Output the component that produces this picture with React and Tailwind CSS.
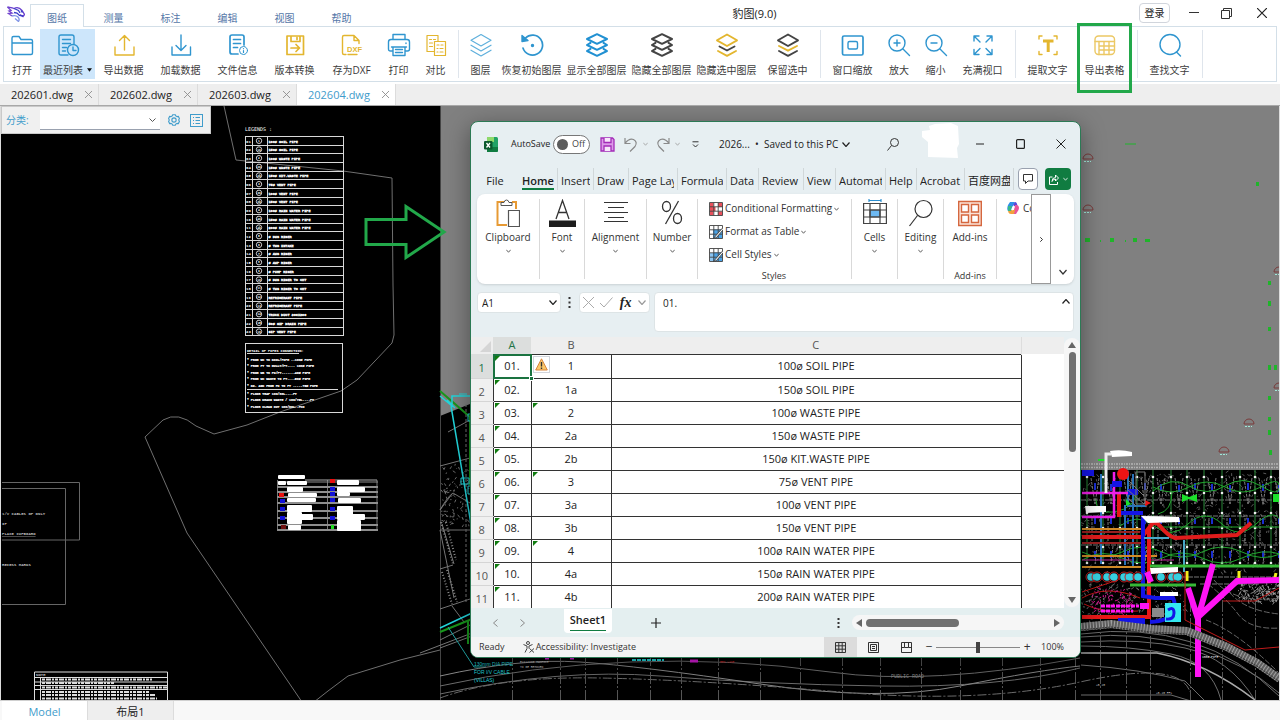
import { useState } from "react";

const BLUE = "#2f95cf";
const GOLD = "#e3b62f";
const DARK = "#444444";

// small icon wrapper used by the top ribbon
function Icon({ color = BLUE, children }) {
  return (
    <svg
      className="w-6 h-6"
      viewBox="0 0 24 24"
      fill="none"
      stroke={color}
      strokeWidth="1.4"
      strokeLinecap="round"
      strokeLinejoin="round"
    >
      {children}
    </svg>
  );
}

function Layers({ colors, width = 1.8 }) {
  return (
    <Icon>
      <g strokeWidth={width}>
        <path d="M12 1.5 22 7.3 12 13 2 7.3Z" stroke={colors[0]} />
        <path d="M2 12.2 12 18l10-5.8" stroke={colors[1]} />
        <path d="M2 17.2 12 23l10-5.8" stroke={colors[2]} />
      </g>
    </Icon>
  );
}

function StackedLayers({ color }) {
  return (
    <Icon color={color}>
      <g strokeWidth="2">
        <path d="M12 1.2 22 6 12 10.8 2 6Z" />
        <path d="M5.500 9.800 2 12l10 4.800L22 12l-3.500-2.200" />
        <path d="M5.500 15.800 2 18l10 4.800L22 18l-3.500-2.200" />
      </g>
    </Icon>
  );
}

const icons = {
  open: (
    <Icon>
      <path d="M2 20V5q0-1.500 1.500-1.500H9l2 3h10q1.500 0 1.500 1.500v12q0 1.500-1.500 1.500H3.500Q2 21.500 2 20ZM2 10h20.500" />
    </Icon>
  ),
  recent: (
    <Icon>
      <path d="M12 22H5q-2 0-2-2V4q0-2 2-2h11q2 0 2 2v7M6.500 6.500h8M6.500 10.500h8M6.500 14.500h4M6.500 18h3" />
      <circle cx="17" cy="17" r="5.500" />
      <path d="M17 14v3.500h3" />
    </Icon>
  ),
  exportData: (
    <Icon color={GOLD}>
      <path d="M3 14v8h19v-8M12.500 17V3M7.500 7.500l5-5 5 5" />
    </Icon>
  ),
  loadData: (
    <Icon>
      <path d="M3 14v8h18.500v-8M12 2v15M7 12.500l5 5 5-5" />
    </Icon>
  ),
  info: (
    <Icon>
      <g strokeWidth="1.700">
        <path d="M12 21H6q-2 0-2-2V4q0-2 2-2h10q2 0 2 2v8M7.500 6.500h7M7.500 10.500h7M7.500 14.500h4" />
      </g>
      <circle cx="17.500" cy="17.500" r="4" strokeWidth="1" />
      <path d="M17.500 17.500v2M17.500 15.500v.2" strokeWidth="1.200" />
    </Icon>
  ),
  version: (
    <Icon color={GOLD}>
      <g strokeWidth="1.700">
        <path d="M4 3h16.500v18.500H4ZM8 3v5.500h9V3M14 4.500v2M8 15h8.500M13 11.500l3.500 3.500-3.500 3.500" />
      </g>
    </Icon>
  ),
  dxf: (
    <Icon color={GOLD}>
      <path d="M6 21.500H4q-1.500 0-1.500-1.500V4Q2.500 2.500 4 2.500h10l5 5v3M14 2.500v5h5M8 21.500h9" />
      <text
        x="7"
        y="19"
        fontSize="7.500"
        fontFamily="Liberation Sans"
        fontWeight="bold"
        fill={GOLD}
        stroke="none"
      >
        DXF
      </text>
    </Icon>
  ),
  print: (
    <Icon>
      <path d="M6 6V1.500h12V6M5.500 18H3.500Q1.500 18 1.500 16V9Q1.500 6.500 4 6.500h16q2.500 0 2.500 2.500v7q0 2-2 2h-2M4.500 14h15M6 14v8.500h12V14M8.500 16.500h7M8.500 19.500h7M19 10v.5" />
    </Icon>
  ),
  compare: (
    <Icon color={GOLD}>
      <g strokeWidth="1.200">
        <path d="M10 18.500H3v-16h11V8M5.500 6.500h2M9.500 6.500h2M5.500 10h3M5.500 13.500h3M10.500 8.500h11v14h-11ZM13 12h2M17 12h2M13 15.500h1M16 15.500h3M13 19h1M16 19h3" />
      </g>
    </Icon>
  ),
  layers: <Layers colors={["#5fb0dc", "#5fb0dc", "#5fb0dc"]} width={1.2} />,
  restore: (
    <Icon>
      <path d="M5.500 5A10 10 0 1 1 3 15" strokeWidth="1.700" />
      <path d="M2 2.500v6l6-1z" fill={BLUE} />
      <circle cx="12.500" cy="12.500" r="1" fill={BLUE} />
    </Icon>
  ),
  showAll: <StackedLayers color="#2090d2" />,
  hideAll: <StackedLayers color={DARK} />,
  hideSelected: (
    <Icon color={GOLD}>
      <g strokeWidth="1.900">
        <path d="M12 1.500 22 7.300 12 13 2 7.300Z" />
        <path d="m4.500 13.500 7.500 4 7.500-4" stroke={DARK} />
        <path d="m3 18 9 4.800 9-4.800" />
      </g>
    </Icon>
  ),
  keepSelected: (
    <Icon color={DARK}>
      <g strokeWidth="1.900">
        <path d="M12 1.500 22 7.300 12 13 2 7.300Z" />
        <path d="m3 13 9 4.700 9-4.700" stroke={GOLD} />
        <path d="m3 18 9 4.800 9-4.800" />
      </g>
    </Icon>
  ),
  zoomWindow: (
    <Icon>
      <rect x="1.500" y="3" width="20.500" height="19" rx="1.500" strokeWidth="1.700" />
      <rect x="7" y="8.500" width="9.500" height="7.500" rx="1.500" />
    </Icon>
  ),
  zoomIn: (
    <Icon>
      <circle cx="10" cy="10" r="8" />
      <path d="m16 16 6.500 6.500M10 7v6M7 10h6" />
    </Icon>
  ),
  zoomOut: (
    <Icon>
      <circle cx="10" cy="10" r="8" />
      <path d="m16 16 6.500 6.500M7 10h6" />
    </Icon>
  ),
  fit: (
    <Icon>
      <path d="M3 8V3h5M3 3l6 6M16 3h5v5M21 3l-6 6M3 16.500v5h5M3 21.500l6-6M21 16.500v5h-5M21 21.500l-6-6" />
    </Icon>
  ),
  extract: (
    <Icon color={GOLD}>
      <path d="M3 6V3h3M18 3h3v3M3 18.500v3h3M18 21.500h3v-3" />
      <path d="M7 8h10.500M12.200 8v11" strokeWidth="3" strokeLinecap="butt" />
    </Icon>
  ),
  exportTable: (
    <Icon color="#ecc864">
      <rect x="2" y="3" width="19.500" height="18.500" rx="3.500" />
      <path d="M2 8.500h19.500M6 8.500v13M11 8.500v13M16 8.500v13M6 13h15.500M6 17h15.500" />
    </Icon>
  ),
  find: (
    <Icon>
      <circle cx="12" cy="11.500" r="10" />
      <path d="m18.500 19 4 4" />
    </Icon>
  ),
};

const tools = [
  { label: "打开", icon: "open", width: "w-[36px]" },
  { label: "最近列表", icon: "recent", width: "w-[55px]", active: true },
  { label: "导出数据", icon: "exportData", width: "w-[57px]" },
  { label: "加载数据", icon: "loadData", width: "w-[57px]" },
  { label: "文件信息", icon: "info", width: "w-[57px]" },
  { label: "版本转换", icon: "version", width: "w-[57px]" },
  { label: "存为DXF", icon: "dxf", width: "w-[57px]" },
  { label: "打印", icon: "print", width: "w-[37px]" },
  { label: "对比", icon: "compare", width: "w-[37px]" },
  null,
  { label: "图层", icon: "layers", width: "w-[37px]" },
  { label: "恢复初始图层", icon: "restore", width: "w-[65px]" },
  { label: "显示全部图层", icon: "showAll", width: "w-[65px]" },
  { label: "隐藏全部图层", icon: "hideAll", width: "w-[65px]" },
  { label: "隐藏选中图层", icon: "hideSelected", width: "w-[65px]" },
  { label: "保留选中", icon: "keepSelected", width: "w-[57px]" },
  null,
  { label: "窗口缩放", icon: "zoomWindow", width: "w-[57px]" },
  { label: "放大", icon: "zoomIn", width: "w-[36px]" },
  { label: "缩小", icon: "zoomOut", width: "w-[37px]" },
  { label: "充满视口", icon: "fit", width: "w-[57px]" },
  null,
  { label: "提取文字", icon: "extract", width: "w-[57px]" },
  { label: "导出表格", icon: "exportTable", width: "w-[57px]", marked: true },
  null,
  { label: "查找文字", icon: "find", width: "w-[57px]" },
  null,
];

function Toolbar() {
  return (
    <div className="flex h-14 mx-[3px] border border-[#d3dfe8] bg-white">
      {tools.map((tool, i) =>
        tool === null ? (
          <div key={i} className="w-2 shrink-0 py-[3px] flex justify-center">
            <div className="w-px bg-[#dfe5ec]" />
          </div>
        ) : (
          <button
            key={i}
            className={`relative shrink-0 my-[2px] pt-1 flex flex-col items-center ${tool.width} ${
              tool.active ? "bg-[#cde6fb]" : ""
            }`}
          >
            {icons[tool.icon]}
            <span className="mt-[5px] flex items-center text-[10px] leading-4 whitespace-nowrap text-[#3c3c3c]">
              {tool.label}
              {tool.active && (
                <svg className="w-[5px] h-1 ml-1" viewBox="0 0 6 4">
                  <path d="M0 0h6L3 4Z" fill="#111" />
                </svg>
              )}
            </span>
            {tool.marked && (
              <span className="absolute inset-x-px -top-[6px] h-[70px] border-[3px] border-[#22a84a]" />
            )}
          </button>
        )
      )}
    </div>
  );
}

function TitleBar() {
  const menus = ["测量", "标注", "编辑", "视图", "帮助"];
  return (
    <div className="flex h-[26px] bg-white">
      <div className="w-[30px] shrink-0 flex items-end justify-center pb-1 pl-[2px]">
        <svg className="w-[18px] h-4" viewBox="0 0 18 16" fill="none" stroke="#5a3fd0" strokeWidth="1.300">
          <path d="M.5 1c2.500.5 4.500.5 6.500 1.500 3-1.500 6-.5 8 2l2.500 4-1.500 2-3-2" stroke="#6a3fce" />
          <path d="M.5 1 4 4.500l-2 .5 3 2-3.500.5L5 10" stroke="#7346cf" />
          <path d="M5 10q4-1 6 1 2 2 .5 4.500L8 12.500" stroke="#7f93e6" />
          <path d="M7 6.500l3 .5 2.500 2.500L16 10M7 2.500l4.500 2L13 7M14 4.500l1.500 2" stroke="#3b3fc8" />
        </svg>
      </div>
      <button className="mt-1 w-[54px] h-[23px] z-10 bg-white border border-b-0 border-[#d3dfe8] text-[10px] pt-1 text-[#5577a8]">
        图纸
      </button>
      <div className="flex pt-[6px]">
        {menus.map((m) => (
          <button key={m} className="w-[57px] pl-[2px] text-[10px] pt-1 text-[#5577a8]">
            {m}
          </button>
        ))}
      </div>
      <h1 className="flex-1 pl-6 pt-[2px] text-center text-[11px] leading-6 text-[#222]">豹图(9.0)</h1>
      <div className="w-[164px] shrink-0 flex items-center justify-end pr-[13px] text-[#222]">
        <button className="w-[31px] h-5 border border-gray-300 rounded-sm text-[10px]">登录</button>
        <button aria-label="最小化" className="ml-[19px]">
          <svg className="w-[10px] h-[10px]" viewBox="0 0 10 10" stroke="#333">
            <path d="M0 4.500h10" />
          </svg>
        </button>
        <button aria-label="还原" className="ml-[22px]">
          <svg className="w-[11px] h-[11px]" viewBox="0 0 11 11" fill="none" stroke="#333">
            <path d="M.5 2.500h8v8h-8zM2.500 2.500v-2h8v8h-2" />
          </svg>
        </button>
        <button aria-label="关闭" className="ml-[25px]">
          <svg className="w-[10px] h-[10px]" viewBox="0 0 10 10" stroke="#222" strokeWidth="1.200">
            <path d="m0 0 10 10M10 0 0 10" />
          </svg>
        </button>
      </div>
    </div>
  );
}

function FileTabs() {
  const [current, setCurrent] = useState("202604.dwg");
  const files = ["202601.dwg", "202602.dwg", "202603.dwg", "202604.dwg"];
  return (
    <div className="mt-[2px] flex h-[22px] bg-[#eeeeee] border-b border-[#a8a8a8]">
      {files.map((f) => (
        <div
          key={f}
          className={`w-[99px] flex items-center justify-between pl-[11px] pr-[6px] border-r border-[#dcdcdc] ${
            f === current ? "bg-white text-[#3f9ccb]" : "text-[#222]"
          }`}
        >
          <button className="text-[11px] leading-5" onClick={() => setCurrent(f)}>
            {f}
          </button>
          <button aria-label="关闭文件">
            <svg className="w-[7px] h-[7px]" viewBox="0 0 8 8" stroke="#8a8a8a">
              <path d="m0 0 8 8M8 0 0 8" />
            </svg>
          </button>
        </div>
      ))}
    </div>
  );
}

function CategoryPanel() {
  return (
    <div className="absolute left-px top-0 w-[210px] h-7 flex items-center bg-[#f0f0f0] border border-[#c9c9c9]">
      <label htmlFor="category" className="w-[38px] pl-1 text-[10px] text-[#3f9ccb]">
        分类:
      </label>
      <div className="relative w-[120px] h-5">
        <select
          id="category"
          className="block appearance-none w-full h-5 bg-white border-b border-gray-400 text-[10px]"
        />
        <svg className="absolute right-1 top-[8px] w-[7px] h-[5px] pointer-events-none" viewBox="0 0 7 5" fill="none" stroke="#555">
          <path d="m.5.5 3 3 3-3" />
        </svg>
      </div>
      <button aria-label="设置" className="ml-2">
        <svg className="w-3 h-[14px]" viewBox="0 0 14 14" fill="none" stroke="#3f9ccb" strokeWidth="1.300">
          <circle cx="7" cy="7" r="2.500" />
          <path d="M5.500.8h3l.6 1.400 1.500.8 1.500-.2 1.200 2.500-.8 1.700.8 1.700-1.200 2.500-1.500-.2-1.500.8-.6 1.400h-3l-.6-1.400-1.500-.8-1.500.2L.7 8.700 1.500 7 .7 5.300l1.200-2.500 1.500.2 1.500-.8Z" />
        </svg>
      </button>
      <button aria-label="列表" className="ml-[10px]">
        <svg className="w-[13px] h-[13px]" viewBox="0 0 13 13" fill="none" stroke="#3f9ccb">
          <rect x=".5" y=".5" width="12" height="12" />
          <path d="M3 3.500h1M5.500 3.500H10M3 6.500h1M5.500 6.500H10M3 9.500h1M5.500 9.500H10" />
        </svg>
      </button>
    </div>
  );
}

const legend = [
  ["1", "100ø SOIL PIPE"],
  ["1a", "150ø SOIL PIPE"],
  ["2", "100ø WASTE PIPE"],
  ["2a", "150ø WASTE PIPE"],
  ["2b", "150ø KIT.WASTE PIPE"],
  ["3", "75ø VENT PIPE"],
  ["3a", "100ø VENT PIPE"],
  ["3b", "150ø VENT PIPE"],
  ["4", "100ø RAIN WATER PIPE"],
  ["4a", "150ø RAIN WATER PIPE"],
  ["4b", "200ø RAIN WATER PIPE"],
  ["5", "Ø DWS  RISER"],
  ["6", "Ø TWS  INTAKE"],
  ["7", "Ø AWS  RISER"],
  ["8", "Ø AWP  RISER"],
  ["9", "Ø PUMP  RISER"],
  ["10", "Ø DWS  RISER TO CHT"],
  ["11", "Ø TWS  RISER TO CHT"],
  ["12", "REFRIGERANT PIPE"],
  ["13", "REFRIGERANT PIPE"],
  ["14", "TRUCK DUCT 300X300"],
  ["15", "50Ø SIP DRAIN PIPE"],
  ["16", "SIP VENT PIPE"],
];

const connections = [
  "* FROM WC TO SOIL/PIPE ..100Ø PIPE",
  "* FROM FT TO GULLY/FT.... 100Ø PIPE",
  "* FROM WB TO FD/FT.......40Ø PIPE",
  "* FROM WC WASTE TO FT....50Ø PIPE",
  "* SK. AND FROM FD TO FT .....75Ø PIPE",
  "* FLOOR TRAP 100/80L....FT",
  "* FLOOR DRAIN WASTE / 100/75L....FT",
  "* FLOOR CLEAN OUT 100/80L..FCO",
];

function LegendTable() {
  const rowH = 8.67;
  return (
    <g fontFamily="Liberation Mono" fontWeight="bold" fill="#fff">
      <text x="245" y="131" fontSize="5" fontFamily="DejaVu Sans Mono" fontWeight="normal">
        LEGENDS :
      </text>
      <g stroke="#d8d8d8" fill="none">
        <path d="M245.500 136v199.500M252.500 136v199.500M267.500 136v199.500M343.500 136v199.500" />
        {Array.from({ length: 24 }, (_, i) => (
          <path key={i} d={`M245 ${Math.round(136 + i * rowH) + 0.5}h99`} />
        ))}
      </g>
      {legend.map(([code, name], i) => (
        <g key={i} fontSize="4">
          <text x="246" y={142.5 + i * rowH}>{String(i + 1).padStart(2, "0")}</text>
          <circle cx="259" cy={140.8 + i * rowH} r="2.700" fill="none" stroke="#fff" strokeWidth=".8" />
          <text x="259" y={142 + i * rowH} fontSize="3" textAnchor="middle">{code}</text>
          <text x="268.500" y={142.5 + i * rowH} stroke="#fff" strokeWidth=".3" fontSize="3.500">{name}</text>
        </g>
      ))}
      <rect x="245.500" y="343.500" width="97" height="69" fill="none" stroke="#d8d8d8" />
      <path d="M247 353.500h52M247 389.500h91" stroke="#d8d8d8" />
      <text x="247" y="352" fontSize="3.500">DETAIL OF PIPES CONNECTION:</text>
      {connections.map((line, i) => (
        <text key={i} x="247" y={361 + i * 6.4 + (i > 4 ? 2 : 0)} fontSize="3.200" stroke="#fff" strokeWidth=".2">
          {line}
        </text>
      ))}
    </g>
  );
}

function ColourLegend() {
  const rows = [482, 487, 492, 497, 503, 511, 518, 525, 530];
  const blobs = [
    [278, 475, 27, 4], [278, 481, 8, 4], [287, 481, 20, 4], [337, 480, 22, 5],
    [287, 487, 16, 5], [337, 487, 28, 5], [288, 493, 29, 4], [337, 492, 13, 4],
    [287, 498, 29, 4], [338, 498, 23, 5], [287, 505, 25, 7], [337, 506, 16, 10],
    [287, 512, 15, 12], [300, 514, 13, 6], [337, 514, 28, 6], [288, 525, 13, 5], [337, 520, 24, 11],
  ];
  const marks = [[330, 479, "#e81010"], [279, 493, "#e81010"], [280, 499, "#1212d8"], [280, 507, "#1212d8"],
    [280, 516, "#1212d8"], [330, 487, "#1212d8"], [330, 492, "#1212d8"], [330, 498, "#1212d8"],
    [330, 507, "#1212d8"], [330, 516, "#1212d8"], [331, 525, "#20e020"], [281, 525, "#701010"]];
  return (
    <g>
      <path d="M277.500 480v51M327.500 480v51M377 480v51" stroke="#777" />
      <path d="M305 480h72" stroke="#aaa" />
      {rows.map((y) => (
        <path key={y} d={`M277 ${y}h101`} stroke="#8e8e8e" strokeWidth={y > 482 ? 2 : 1} />
      ))}
      {marks.map(([x, y, c]) => (
        <rect key={`${x}-${y}`} x={x} y={y} width={c === "#20e020" ? 3 : 5} height="4" fill={c} />
      ))}
      {blobs.map(([x, y, w, h]) => (
        <rect key={`${x}-${y}`} x={x} y={y} width={w} height={h} rx="1" fill="#fff" />
      ))}
    </g>
  );
}

// keeps the scattered specks the same on every render
function noise(n) {
  const v = Math.sin(n * 12.9898) * 43758.5453;
  return v - Math.floor(v);
}

function specks(count, x, y, w, h, seed) {
  let d = "";
  for (let i = 0; i < count; i++) {
    const px = x + noise(seed + i) * w;
    const py = y + noise(seed + i * 3 + 500) * h;
    d += `M${px.toFixed(1)} ${py.toFixed(1)}l${(noise(i + seed * 2) * 5 - 2).toFixed(1)} ${(noise(i * 7 + seed) * 6 - 3).toFixed(1)}`;
  }
  return d;
}

function PipePlan() {
  const columns = [1087, 1103, 1120, 1137, 1153, 1171, 1187, 1204, 1222, 1240, 1255, 1271];
  const levels = [477, 493, 513, 528, 547, 563];
  return (
    <g fill="none">
      <path d="M1081 464h199M1081 467.500h199" stroke="#b4b4b4" strokeWidth="1.500" strokeDasharray="2 1 1 1" />
      <path d={specks(700, 1081, 472, 198, 100, 3)} stroke="#707070" strokeWidth=".8" />
      <path d={specks(200, 1081, 583, 105, 38, 40)} stroke="#888" strokeWidth=".8" />
      <path d={specks(160, 1238, 584, 41, 18, 90)} stroke="#aaa" strokeWidth=".8" />
      <path d="M1081 500h199M1081 516h199M1081 545h199M1170 577h109M1200 584h60" stroke="#777" strokeDasharray="5 1" />
      {columns.map((x, i) => (
        <g key={x}>
          <path d={`M${x} 470v93`} stroke="#2a8a3a" />
          <path d={`M${x + 4} 478l4 26M${x + 12} 478l-4 26M${x + 5} 518v26M${x + 10} 546l-2 18`} stroke="#7d7d7d" strokeDasharray="3 1" />
          <path d={`M${x + 8} ${483 + (i % 3)}v7M${x + 8} 518v6M${x + 8} 551v7`} stroke="#1a2ed0" strokeWidth="2" />
          {levels.map((y) => (
            <circle key={y} cx={x} cy={y} r="1.300" fill="#eee" />
          ))}
        </g>
      ))}
      <path d="M1153 491q18-16 36-5t36 0 36 0 18 2M1153 487q18 10 36 0t36 0 36 0 18-2M1120 526q17-14 34 0t34-2 34 0 34 0 24-4M1082 560q20-12 40-2t40 0 40 0 40 0 38-4M1082 552q20 10 40 0t40 0 40 0 40 0 38 2M1160 527h120" stroke="#22a52e" />
      <path d="M1096 500q0 14 18 12 22-4 22-20M1158 514q14-3 14-22" stroke="#22a52e" />
      <path d="M1128 472v34h18M1133 474v92M1101 474v90M1125 505v60" stroke="#2874b8" strokeWidth="2" />
      <path d="M1082 529h60M1082 556h75M1082 567h60" stroke="#d08a28" strokeWidth="2" />
      <path d="M1082 560h50M1150 560h24" stroke="#c0269c" />
      <path d="M1082 537h60l10-13q4-3 8 2 8 10 15 12l62-3 14-12" stroke="#e01c1c" strokeWidth="4" />
      <path d="M1149 527v90h-67M1119 492v25" stroke="#e81818" strokeWidth="4" />
      <path d="M1082 543h60M1082 532h58" stroke="#9a2020" strokeWidth="2" />
      <path d="M1114 472v45h-32M1082 493h46" stroke="#f01ee8" strokeWidth="2.500" />
      <path d="M1143 516v80l12 2h18q3 6 1 14-5 9-24 10M1121 513h22" stroke="#1414e6" strokeWidth="4" />
      <path d="M1118 621h27M1082 473h12M1128 492h10M1112 484h10" stroke="#1414e6" strokeWidth="6" />
      <path d="M1144 538h25M1184 540v32" stroke="#48a8c8" strokeWidth="2" />
      <path d="M1150 566h129M1130 585h66" stroke="#37b837" strokeWidth="3" />
      <path d="M1082 598q25-14 58 0M1082 592l36-12M1084 604q18 10 54 7" stroke="#c41616" />
      <path d={specks(80, 1092, 588, 40, 26, 71)} stroke="#c41686" />
      <circle cx="1123" cy="474" r="6" fill="#ee1414" />
      <path d="m1145 500 6 3-6 3z" fill="#ee1414" />
      <path d="M1136 472h9v32h-9zM1128 490l16 14M1128 480l16 16M1128 498l8 8" stroke="#777" />
      {[1091, 1097, 1107, 1114, 1124, 1130, 1138, 1161, 1172, 1178].map((x) => (
        <g key={x}>
          <circle cx={x} cy="577" r="5" stroke="#c02020" />
          <circle cx={x} cy="577" r="3.800" fill="#38cfe0" />
        </g>
      ))}
      <rect x="1165" y="603" width="16" height="19" fill="#34e8f0" />
      <path d="M1168 610q6-4 6 3t-8 6" stroke="#1414e6" strokeWidth="3" />
      <path d="M1152 608h12v9h-12z" fill="#8a8a8a" />
      <path d="M1182 494l7 3 8-3v8l-8-3-7 3zM1273 494h6v8h-6zM1098 459h8v2h-8zM1126 499l5 5-5 2z" fill="#1be02a" />
      <path d="M1187 571v10M1239 571v9M1276 573l-2 8M1147 573l2 10" stroke="#f2ec1a" strokeWidth="3" />
      <g fill="#fff">
        <path d="M1110 451q11-2 22 1v4l-20 1zM1141 516q20 0 38 1l1 5-32 1zM1085 506h21v6l-20 1zM1150 568l28-1v5l-27 2zM1160 592h18v4h-18z" />
      </g>
      <path d="M1106 493v-39h5" stroke="#eee" strokeWidth="3" />
      <path d="M1208 584q18 14 30 30t42 14M1214 580q20 24 66 18M1206 620q32 12 74 54M1225 586q14 24 54 28" stroke="#666" strokeDasharray="6 2" />
      {/* main riser */}
      <g stroke="#ff14f4" strokeWidth="6">
        <path d="M1198 677v-58l-10-31M1198 618l15-54M1198 617l39-36 42-1" />
        <path d="M1101 606h38M1101 611h32" strokeWidth="3" strokeDasharray="4 1" />
        <path d="M1140 606h9M1147 572l4 10" />
      </g>
      <path d="M1185 572v48l60 30 34-3M1223 601h32l24-13" stroke="#c11a1a" />
      <path d="M1081 627l30-3 40 5 36 2 40 16 30 16 23 16" stroke="#5f5f5f" strokeWidth="8" />
      <path d="M1081 627l30-3 40 5 36 2 40 16 30 16 23 16" stroke="#a0a0a0" strokeWidth="8" strokeDasharray="1 2" />
      <path d="M1081 630l30-3 40 5 36 2 40 16 30 16 23 16" stroke="#333" strokeDasharray="2 1" />
    </g>
  );
}

function CadDrawing() {
  return (
    <svg
      className="absolute inset-0 w-full h-full"
      viewBox="0 106 1280 594"
      preserveAspectRatio="xMinYMin slice"
    >
      <rect x="0" y="106" width="1280" height="594" fill="#000" />
      <path d="M440 106h840v364H1081L470 404l-30 12Z" fill="#808080" />
      <path d="M440.500 106v594" stroke="#444" />
      <path
        d="M224 106 236 160 343 171 392 178 393 285 394 335 392 343 357 380 341 391 280 412 247 425 214 434 196 426Q178 411 163 420L145 437 187 533 302 702M314 702 328 691 348 676 400 660 440 650"
        fill="none"
        stroke="#6f6f6f"
      />
      <path d="M2 482.500h77.500v57.500H2M2 488.500h63.500v116H2" fill="none" stroke="#666" />
      <g fill="#bbb" fontFamily="Liberation Mono" fontSize="4" fontWeight="bold">
        <text x="2" y="515">1/V CABLES OF ONLY</text>
        <text x="2" y="525">IP</text>
        <text x="2" y="535" textDecoration="underline">PLACE CUPBOARD</text>
        <text x="2" y="566">RECESS MARKS</text>
      </g>
      <LegendTable />
      <ColourLegend />
      <g stroke="#ddd" fill="none">
        <path d="M34.500 672h133v30h-133zM34 677.500h133M34 682h133M34 685.500h133M34 689.500h133M40.500 677v24" />
        <path d="M42 679.500h110M42 683h72M42 687.500h125M42 692h107M42 695h114M42 698.500h115" strokeWidth="2" strokeDasharray="3 1 5 1 2 1" />
      </g>
      <text x="36" y="676" fontSize="4" fill="#fff" fontFamily="Liberation Mono">NOTE</text>

      {/* site plan left of the sheet */}
      <g fill="none">
        <path d="M448 432l22-12M440 510l12-16M440 466l30-8M440 530h30M442 524l12 40M440 530l14 68M440 569l13-4M440 609l30-10M452 606l12 16M440 640l32-16M440 648l32-12M420 653l52-20M440 510q8-14 13-17l17 10" stroke="#777" />
        <path d="M441 522l12 42M446 522l10 38M442 572l10 32M447 570l10 32" stroke="#888" strokeWidth="2" strokeDasharray="1 2" />
        <path d={specks(90, 441, 465, 28, 60, 12)} stroke="#888" strokeWidth=".8" />
        <path d="M466 404v200" stroke="#777" strokeDasharray="3 2" />
        <path d="M440 391l30 26v68M440 632l32-13M468 620v24" stroke="#18961c" strokeWidth="2" />
        <path d="M440 396l12 10v-10h18M451 406l20 118M447 400l8 8M440 628l32-15" stroke="#22d6dc" strokeWidth="1.500" />
        <path d="M468 414h5v7h-5zM461 478h8v6h-8zM468 486h4v8h-4zM459 394h8" stroke="#22d6dc" />
        <path d="M448 627l26 40h12" stroke="#22a9a9" />
      </g>

      {/* contours along the road */}
      <g fill="none" stroke="#6c6c6c">
        <path d="M440 686q90-20 190-24t200 10 250-14" />
        <path d="M440 694q120-26 220-18t220 10 200-18" />
        <path d="M440 676q80-18 140-14t180 22 200 2 120-20" stroke="#888" />
        <path d="M440 698q60-22 160-20t240 14 240-10 110 10" strokeDasharray="9 2 2 2" />
        <path d="M1081 634q60-8 110 8t88 54M1081 642q60-4 104 6t70 52M1081 665q60 4 104 16l20 20M1081 695h90l20 6M1081 637q60-6 112 10t86 46M1081 646q50 0 90 8t50 46" />
        <path d="M1081 653h76q50 10 98 47" stroke="#aaa" strokeWidth="1.500" />
        {[512, 560, 585, 617, 650, 681, 718, 760, 800, 842, 880, 921, 960, 1002, 1040, 1075, 1100, 1126, 1150, 1190, 1222, 1255].map((x) => (
          <path key={x} d={`M${x}.500 600v100`} stroke="#555" strokeDasharray="12 2 2 2" />
        ))}
      </g>
      <PipePlan />
      <g fontFamily="Liberation Mono">
        <g fontSize="5" fill="#22d6dc" fontFamily="Liberation Sans">
          <text x="474" y="666">130mm DIA PIPE</text>
          <text x="474" y="674">FOR I/V CABLE</text>
          <text x="474" y="682">(VILLAS)</text>
        </g>
        <text x="891" y="678" fontSize="5" fill="#888">PUBLIC ROAD</text>
        <g fontSize="3" fill="#ccc">
          <text x="520" y="663">EXISTING MANHOLE</text>
          <text x="520" y="668">TO BE REMOVED</text>
          <text x="720" y="663" fill="#c22">RED LINE</text>
          <text x="1202" y="658" fill="#fff">150Ø PIPE</text>
          <text x="1096" y="686">+5.20</text>
          <text x="1156" y="694">+5.20 FFL</text>
        </g>
        <path d="M632 660h32" stroke="#22d6dc" strokeWidth="2" strokeDasharray="4 1" />
        <path d="M545 658h4M570 658h4M690 661h8" stroke="#d81cd8" strokeWidth="3" />
      </g>

      {/* survey marks on the grey area */}
      <g fill="#1fb52a">
        <path d="M1125 143.500h11v1h-11zM1256 182h3v4h-3zM1085 238h5v4h-5zM1110 238h4v4h-4zM1133 238h4v4h-4zM1145 239h5v3h-5zM1100 240h1v2h-1zM1125 240h1v2h-1zM1268 281h3v4h-3zM1268 301h3v5h-3zM1268 327h3v4h-3zM1268 365h3v5h-3zM1274 365h3v5h-3zM1268 396h3v4h-3zM1268 417h3v4h-3zM1268 430h3v5h-3zM1269 450h3v5h-3z" />
      </g>
      {[[1088, 159], [1088, 210], [1249, 424], [1224, 452], [1279, 272], [1279, 388]].map(([x, y]) => (
        <g key={`${x}-${y}`}>
          <path d={`M${x - 5} ${y}a5 5 0 0 1 10 0Z`} fill="none" stroke="#7a3a3a" />
          <path d={`M${x - 4} ${y + 2.5}h7`} stroke="#9fe8d8" strokeDasharray="2 1" />
        </g>
      ))}

      <path
        d="M366 219.500h40v-13l38 25.500-38 25.500v-13h-40Z"
        fill="none"
        stroke="#22a84a"
        strokeWidth="3"
      />
      <path d="M.5 106v594M1279.500 106v594" stroke="#dcdcdc" />
    </svg>
  );
}

function Chevron({ up = false, className = "w-[7px] h-[5px]" }) {
  return (
    <svg className={className} viewBox="0 0 8 5" fill="none" stroke="currentColor" strokeWidth="1.200">
      <path d={up ? "m.5 4.500 3.500-4 3.500 4" : "m.5.5 3.500 4 3.500-4"} />
    </svg>
  );
}

function ExcelTitle() {
  return (
    <div className="flex items-center h-11 pl-[13px] pr-[14px] text-[10px] text-[#222]">
      <svg className="w-[14px] h-[15px]" viewBox="0 0 14 15">
        <rect x="3" width="11" height="15" rx="1.500" fill="#21a366" />
        <path d="M3 0h7v5H3z" fill="#8ed96b" />
        <path d="M3 10h11v3.500q0 1.500-1.500 1.500H3z" fill="#107c41" />
        <rect y="4" width="8.500" height="8.500" rx="1" fill="#0b5a2e" />
        <path d="m2.500 6 3.500 4.500M6 6l-3.500 4.500" stroke="#fff" strokeWidth="1.300" />
      </svg>
      <label htmlFor="autosave" className="ml-[13px] w-[39px] text-[9px] whitespace-nowrap">
        AutoSave
      </label>
      <div className="relative ml-[3px] w-[37px] h-[19px]">
        <input
          id="autosave"
          type="checkbox"
          className="appearance-none block w-full h-full rounded-full border border-[#777] bg-white"
        />
        <span className="absolute left-1 top-1 w-[11px] h-[11px] rounded-full bg-[#5c5c5c] pointer-events-none" />
        <span className="absolute left-[19px] top-0 leading-[18px] text-[9px] text-[#444] pointer-events-none">Off</span>
      </div>
      <button aria-label="Save" className="ml-[10px]">
        <svg className="w-[15px] h-[15px]" viewBox="0 0 15 15" fill="#dc9ae8" stroke="#a32bb8" strokeWidth="1.300">
          <path d="M1 1h11.500l1.500 1.500V14H1z" />
          <path d="M4 1v4.500h7V1M4 14V9h7v5" fill="#f7e6fa" />
        </svg>
      </button>
      <button aria-label="Undo" className="ml-[9px] flex items-center text-[#999]">
        <svg className="w-[14px] h-[15px]" viewBox="0 0 14 15" fill="none" stroke="#8a8a8a" strokeWidth="1.200">
          <path d="M1 1v5.500h5.500M1 6.500Q5 1 9.500 2.500 14 5 11 9.500L6 14.500" />
        </svg>
        <Chevron className="w-[5px] h-1 ml-[5px]" />
      </button>
      <button aria-label="Redo" className="ml-2 flex items-center text-[#999]">
        <svg className="w-[14px] h-[15px]" viewBox="0 0 14 15" fill="none" stroke="#8a8a8a" strokeWidth="1.200">
          <path d="M13 1v5.500H7.500M13 6.500Q9 1 4.500 2.500 0 5 3 9.500l5 5" />
        </svg>
        <Chevron className="w-[5px] h-1 ml-[5px]" />
      </button>
      <button aria-label="Customize" className="ml-3">
        <svg className="w-[7px] h-[7px]" viewBox="0 0 7 7" fill="none" stroke="#333">
          <path d="M.5.8h6M1 3.500l2.500 2.500L6 3.500" />
        </svg>
      </button>
      <span className="ml-5 w-9">2026...</span>
      <button className="flex items-center gap-1 whitespace-nowrap">
        <span>•&nbsp; Saved to this PC</span>
        <Chevron className="w-2 h-[5px]" />
      </button>
      <div className="flex-1 flex items-center justify-end">
        <button aria-label="Search">
          <svg className="w-3 h-[13px]" viewBox="0 0 12 13" fill="none" stroke="#333">
            <circle cx="7.500" cy="4.500" r="4" />
            <path d="M4.500 7.500.5 12.500" />
          </svg>
        </button>
        <svg className="w-10 h-9 ml-[22px] -mt-[6px]" viewBox="0 0 40 36" fill="#fff">
          <path d="M8 3 14 1 30 0l7 3 1 18-2 4 1 10-30-1V19L1 14V8l8-1Z" />
        </svg>
        <button aria-label="Minimize" className="ml-[15px]">
          <svg className="w-2 h-[10px]" viewBox="0 0 8 10" stroke="#222">
            <path d="M0 5h8" />
          </svg>
        </button>
        <button aria-label="Maximize" className="ml-8">
          <svg className="w-[9px] h-[10px]" viewBox="0 0 9 10" fill="none" stroke="#222" strokeWidth="1.200">
            <rect x=".6" y=".6" width="7.800" height="8.800" rx="1" />
          </svg>
        </button>
        <button aria-label="Close" className="ml-[31px]">
          <svg className="w-[10px] h-[10px]" viewBox="0 0 10 10" stroke="#222">
            <path d="m.5.5 9 9M9.500.5l-9 9" />
          </svg>
        </button>
      </div>
    </div>
  );
}

const excelTabs = [
  { label: "Insert", width: "w-9" },
  { label: "Draw", width: "w-[35px]" },
  { label: "Page Lay", width: "w-[49px]" },
  { label: "Formulas", width: "w-[49px]" },
  { label: "Data", width: "w-8" },
  { label: "Review", width: "w-[45px]" },
  { label: "View", width: "w-8" },
  { label: "Automat", width: "w-[50px]" },
  { label: "Help", width: "w-[31px]" },
  { label: "Acrobat", width: "w-[48px]" },
  { label: "百度网盘", width: "w-[49px]" },
];

function ExcelTabs() {
  return (
    <nav className="flex items-start h-[26px] mt-[2px] pr-[9px] text-[11px] text-[#222]">
      <button className="w-[48px] leading-[26px]">File</button>
      <button className="w-[39px] flex justify-center border-r border-[#d0d7d9] font-semibold">
        <span className="leading-[26px] h-[22px] border-b-2 border-[#107c41]">Home</span>
      </button>
      {excelTabs.map((tab) => (
        <button
          key={tab.label}
          className={`shrink-0 h-[22px] px-[3px] leading-[26px] border-r border-[#d0d7d9] text-left ${tab.width}`}
        >
          <span className="block overflow-hidden whitespace-nowrap">{tab.label}</span>
        </button>
      ))}
      <div className="flex-1 flex justify-end gap-[7px]">
        <button aria-label="Comments" className="w-5 h-[22px] flex items-center justify-center bg-white border border-gray-400 rounded">
          <svg className="w-[10px] h-[10px]" viewBox="0 0 10 10" fill="none" stroke="#333">
            <path d="M.5.5h9v6.500H5L2.500 9.500V7h-2Z" />
          </svg>
        </button>
        <button aria-label="Share" className="w-[26px] h-[22px] flex items-center justify-center gap-1 bg-[#107c41] rounded text-white">
          <svg className="w-[10px] h-[11px]" viewBox="0 0 10 11" fill="none" stroke="#fff">
            <path d="M3.500 3H.5v7.500h8V8M3 7.500Q3 3.500 6.500 3.500V1L9.500 4 6.500 7V5Q4 5 3 7.500Z" />
          </svg>
          <Chevron className="w-[5px] h-1" />
        </button>
      </div>
    </nav>
  );
}

function RibbonGroup({ label, width, footer, children }) {
  return (
    <div className={`shrink-0 flex pt-[5px] pb-[2px] ${width}`}>
      <button className="flex-1 flex flex-col items-center">
        {children}
        <span className="mt-[2px] leading-4">{label}</span>
        {!footer && <Chevron className="w-[5px] h-1 mt-[4px]" />}
        {footer && <span className="mt-auto leading-3 text-[9px]">{footer}</span>}
      </button>
      <div className="w-px mb-[3px] bg-[#d9d9d9]" />
    </div>
  );
}

const styleRows = [
  { label: "Conditional Formatting", a: "#e8505b", b: "#e8505b" },
  { label: "Format as Table", a: "#ffffff", b: "#4aa3e8" },
  { label: "Cell Styles", a: "#8cc4f0", b: "#4aa3e8" },
];

function StyleIcon({ a, b, brush }) {
  return (
    <svg className="w-[14px] h-[14px]" viewBox="0 0 14 14" fill="none">
      <path d="M.5.500h13v13H.5z" fill="#fff" />
      {brush ? (
        <path d="M4 4.500h9.500v9H4z" fill={b} />
      ) : (
        <path d="M1 1h3.500v12H1zM9 1h4.500v4H9zM9 9.500h4.500v4H9zM4.500 5h2v4h-2z" fill={a} />
      )}
      {brush && <path d="M1 5h3v8H1z" fill={a} />}
      <path d="M.5.500h13v13H.5zM.5 4.800h13M.5 9.200h13M4.800.5v13M9.200.5v13" stroke="#444" strokeWidth=".9" />
      {brush && <path d="m13.500 3-7 8-2 2.500 3-1L14 5" fill="#f4f4f4" stroke="#333" strokeWidth=".8" />}
    </svg>
  );
}

function ExcelRibbon() {
  return (
    <div className="mx-[6px] h-[90px] flex bg-white rounded-lg shadow text-[10px] text-[#333] overflow-hidden">
      <RibbonGroup label="Clipboard" width="w-[63px]">
        <svg className="w-6 h-[28px]" viewBox="0 0 24 28" fill="none">
          <path d="M8 3H1.500v23H11M16 3h4v7" stroke="#e79a34" strokeWidth="2" />
          <path d="M5 6.500V3.500h3Q8.500 1 10.500 1t2.500 2.500h3v3z" fill="#fff" stroke="#555" />
          <path d="M12.500 11.500h11v16h-11z" fill="#fff" stroke="#555" strokeWidth="1.200" />
        </svg>
      </RibbonGroup>
      <RibbonGroup label="Font" width="w-[45px]">
        <svg className="w-[27px] h-[28px]" viewBox="0 0 27 28">
          <path d="M7 20 13.500 1.500 20 20M9.500 13.500h8" fill="none" stroke="#333" strokeWidth="1.300" />
          <path d="M0 21.500h27V28H0z" fill="#1d1d1d" />
        </svg>
      </RibbonGroup>
      <RibbonGroup label="Alignment" width="w-[62px]">
        <svg className="w-6 h-[28px]" viewBox="0 0 24 28" stroke="#333" strokeWidth="1.200">
          <path d="M0 3.500h24M4 8.500h16M0 13.500h24M4 18.500h16M0 22.500h24" />
        </svg>
      </RibbonGroup>
      <RibbonGroup label="Number" width="w-[51px]">
        <svg className="w-[22px] h-[28px]" viewBox="0 0 22 28" fill="none" stroke="#333" strokeWidth="1.300">
          <ellipse cx="5.500" cy="7.500" rx="4" ry="5" />
          <ellipse cx="16.500" cy="19.500" rx="4" ry="5" />
          <path d="M17.500 2 4.500 25" />
        </svg>
      </RibbonGroup>
      <div className="w-[154px] shrink-0 flex pt-[5px] pb-[2px]">
        <div className="flex-1 flex flex-col pl-[11px]">
          {styleRows.map((row, i) => (
            <button key={row.label} className="flex items-center gap-[2px] h-[23px] pb-1 whitespace-nowrap">
              <StyleIcon a={row.a} b={row.b} brush={i > 0} />
              {row.label}
              <Chevron className="w-[5px] h-1" />
            </button>
          ))}
          <span className="mt-auto pr-3 text-center leading-3 text-[9px]">Styles</span>
        </div>
        <div className="w-px mb-[3px] bg-[#d9d9d9]" />
      </div>
      <RibbonGroup label="Cells" width="w-[46px]">
        <svg className="w-6 h-[28px]" viewBox="0 0 24 28" fill="none" stroke="#444" strokeWidth="1.200">
          <path d="M6 1.500h12M6 0v3M18 0v3" stroke="#2d8fd0" />
          <path d="M7 11h10v7H7z" fill="#6db9f2" />
          <path d="M.6 4.500h22.800v20H.6zM.6 11h22.800M.6 18h22.800M7 4.500v20M17 4.500v20" />
        </svg>
      </RibbonGroup>
      <RibbonGroup label="Editing" width="w-[46px]">
        <svg className="w-6 h-[28px]" viewBox="0 0 24 28" fill="none" stroke="#333" strokeWidth="1.200">
          <circle cx="14.500" cy="10" r="8.500" />
          <path d="M8.500 16.500.5 27" />
        </svg>
      </RibbonGroup>
      <RibbonGroup label="Add-ins" width="w-[53px]" footer="Add-ins">
        <svg className="w-6 h-[28px]" viewBox="0 0 24 28" fill="#fff" stroke="#d5673f" strokeWidth="1.400">
          <path d="M.7 2.500h22.600v24H.7z" fill="#fbe3d8" />
          <path d="M3.500 5.500h7v7.500h-7zM13.500 5.500h7v7.500h-7zM3.500 16h7v7.500h-7zM13.500 16h7v7.500h-7z" />
        </svg>
      </RibbonGroup>
      <div className="flex-1 overflow-hidden flex items-start pl-[10px] pt-[6px]">
        <button className="flex items-center gap-1">
          <svg className="w-3 h-[14px] shrink-0" viewBox="0 0 12 14">
            <path d="M3 1h5L6 5 4 10H1Q-.5 8 1 4Z" fill="#2f8fe8" />
            <path d="M8 1q2 0 2.500 4L8 6 6 4Z" fill="#5b46d8" />
            <path d="M10 4q3 1 1.500 5L9 13H5l2-4 1-5Z" fill="#e8569a" />
            <path d="M1 9q0 4 3 4h3l1-4Z" fill="#f2a13c" />
            <path d="M1 5h4L4 10H1Z" fill="#37b98a" />
            <path d="m7 5-2 4" stroke="#fff" strokeWidth="2" />
          </svg>
          <span className="leading-4">Co</span>
        </button>
      </div>
      <button aria-label="More groups" className="w-5 shrink-0 border border-[#999] flex items-center justify-center">
        <svg className="w-[3px] h-[5px]" viewBox="0 0 3 5" fill="none" stroke="#333">
          <path d="m.3.300 2.200 2.200L.3 4.700" />
        </svg>
      </button>
      <button aria-label="Collapse ribbon" className="w-[23px] shrink-0 flex items-end justify-center pb-[9px]">
        <Chevron className="w-2 h-[6px]" />
      </button>
    </div>
  );
}

function FormulaBar() {
  return (
    <div className="flex items-start mt-2 mx-[6px] text-[10px] text-[#222]">
      <div className="relative w-[84px] h-[21px]">
        <input aria-label="Name box" defaultValue="A1" className="w-full h-full pl-1 bg-white rounded border border-[#dde4e6]" />
        <Chevron className="absolute right-1 top-2 w-2 h-[5px]" />
      </div>
      <svg className="w-[3px] h-[11px] ml-[7px] mt-[5px]" viewBox="0 0 3 11" fill="#333">
        <path d="M.5 0h2v2h-2zM.5 4.500h2v2h-2zM.5 9h2v2h-2z" />
      </svg>
      <div className="ml-2 w-[71px] h-[21px] flex items-center justify-around bg-white rounded border border-[#dde4e6]">
        <button aria-label="Cancel">
          <svg className="w-[11px] h-[11px]" viewBox="0 0 11 11" stroke="#aaa">
            <path d="m0 0 11 11M11 0 0 11" />
          </svg>
        </button>
        <button aria-label="Enter">
          <svg className="w-[13px] h-[11px]" viewBox="0 0 13 11" fill="none" stroke="#aaa">
            <path d="m0 6 4 4L12.500.5" />
          </svg>
        </button>
        <button className="font-['Liberation_Serif'] italic font-bold text-[14px] leading-4">fx</button>
        <Chevron className="w-2 h-[5px] text-[#999]" />
      </div>
      <div className="relative flex-1 ml-1 h-10">
        <textarea
          aria-label="Formula"
          defaultValue="01."
          className="w-full h-full resize-none px-2 py-[2px] leading-4 bg-white rounded border border-[#dde4e6]"
        />
        <Chevron up className="absolute right-1 top-[7px] w-2 h-[5px]" />
      </div>
    </div>
  );
}

function Flag() {
  return (
    <svg className="absolute left-px top-px w-[5px] h-[5px]" viewBox="0 0 5 5">
      <path d="M0 0h5L0 5Z" fill="#107c10" />
    </svg>
  );
}

function Sheet() {
  const rows = legend.slice(0, 11);
  const flagged = [2, 5, 8];
  return (
    <div className="flex mt-[5px] h-[271px]">
      <div className="flex-1 overflow-hidden bg-white">
        <table className="w-full table-fixed border-collapse text-[11px] text-[#222]">
          <thead>
            <tr className="h-[17px] bg-[#eeeeee] text-[#555]">
              <th className="w-[22px] relative">
                <svg className="absolute right-[2px] bottom-[2px] w-[11px] h-[11px]" viewBox="0 0 11 11">
                  <path d="M11 0v11H0Z" fill="#d5d5d5" />
                </svg>
              </th>
              <th className="w-[38px] p-0 font-normal leading-4 bg-[#dcdedd] text-[#217346]">A</th>
              <th className="w-[80px] p-0 font-normal leading-4">B</th>
              <th className="p-0 font-normal leading-4 border-r border-[#ddd]">C</th>
              <th className="w-[43px] p-0" />
            </tr>
          </thead>
          <tbody>
            {rows.map(([code, name], i) => (
              <tr key={name} className={i === 0 ? "h-6" : "h-[23px]"}>
                <th
                  className={`p-0 pt-1 font-normal leading-4 border-b border-[#d5d5d5] ${
                    i === 0 ? "bg-[#dcdedd] text-[#217346]" : "bg-[#f0f0f0] text-[#555]"
                  }`}
                >
                  {i + 1}
                </th>
                <td className="relative p-0 text-center leading-4 border border-[#333]">
                  <Flag />
                  {String(i + 1).padStart(2, "0")}.
                  {i === 0 && (
                    <>
                      <span className="absolute -inset-px border-2 border-[#1a7340]" />
                      <span className="absolute -right-[3px] -bottom-[3px] w-[5px] h-[5px] bg-[#1a7340] border border-white" />
                    </>
                  )}
                </td>
                <td className="relative p-0 text-center leading-4 border border-[#333]">
                  {flagged.includes(i) && <Flag />}
                  {code}
                  {i === 0 && (
                    <button aria-label="Error options" className="absolute left-px top-px w-[17px] h-[17px] bg-white border border-gray-300 flex items-center justify-center">
                      <svg className="w-[13px] h-[13px]" viewBox="0 0 13 13">
                        <path d="M6.500.8 12.300 12H.7Z" fill="#fbc86a" stroke="#d8843a" />
                        <path d="M6.500 4v4.500M6.500 9.500V11" stroke="#333" strokeWidth="1.400" />
                      </svg>
                    </button>
                  )}
                </td>
                <td className="p-0 text-center leading-4 border border-[#333]">{name}</td>
                <td className={i === 4 ? "p-0 border-b border-[#333]" : "p-0"} />
              </tr>
            ))}
            <tr className="h-[23px]">
              <th className="bg-[#f0f0f0]" />
              <td className="border-x border-[#333]" />
              <td className="border-x border-[#333]" />
              <td className="border-x border-[#333]" />
              <td />
            </tr>
          </tbody>
        </table>
      </div>
      <div className="w-4 my-px bg-[#f6f6f6] rounded-full flex flex-col items-center justify-between py-1">
        <svg className="w-2 h-[6px]" viewBox="0 0 8 6">
          <path d="M4 0 8 6H0Z" fill="#666" />
        </svg>
        <div className="flex-1 pt-1">
          <div className="w-[7px] h-[100px] rounded-full bg-[#707070]" />
        </div>
        <svg className="w-2 h-[6px]" viewBox="0 0 8 6">
          <path d="M0 0h8L4 6Z" fill="#666" />
        </svg>
      </div>
    </div>
  );
}

function SheetTabs() {
  return (
    <div className="h-[29px] flex items-center bg-[#e4eff0] pr-4 text-[#222]">
      <button aria-label="Previous sheet" className="ml-[22px]">
        <svg className="w-[5px] h-2" viewBox="0 0 5 8" fill="none" stroke="#888">
          <path d="M4.500.5.500 4l4 3.500" />
        </svg>
      </button>
      <button aria-label="Next sheet" className="ml-[22px]">
        <svg className="w-[5px] h-2" viewBox="0 0 5 8" fill="none" stroke="#888">
          <path d="m.5.5 4 3.500-4 3.500" />
        </svg>
      </button>
      <button className="ml-[39px] w-12 h-6 mb-1 bg-white rounded-b text-[11px] font-semibold">
        <span className="inline-block leading-5 border-b border-[#107c41]">Sheet1</span>
      </button>
      <button aria-label="New sheet" className="ml-[39px]">
        <svg className="w-[10px] h-[10px]" viewBox="0 0 10 10" stroke="#222" strokeWidth="1.200">
          <path d="M5 0v10M0 5h10" />
        </svg>
      </button>
      <div className="flex-1 flex items-center justify-end">
        <svg className="w-[3px] h-[10px]" viewBox="0 0 3 10" fill="#333">
          <path d="M.5 0h2v2h-2zM.5 4h2v2h-2zM.5 8h2v2h-2z" />
        </svg>
        <div className="ml-3 w-[212px] h-[15px] flex items-center px-1 bg-[#f6f6f6] rounded-full">
          <svg className="w-[6px] h-2" viewBox="0 0 6 8">
            <path d="M6 0v8L0 4Z" fill="#666" />
          </svg>
          <div className="flex-1 pl-1">
            <div className="w-[93px] h-2 rounded-full bg-[#707070]" />
          </div>
          <svg className="w-[6px] h-2" viewBox="0 0 6 8">
            <path d="M0 0v8l6-4Z" fill="#666" />
          </svg>
        </div>
      </div>
    </div>
  );
}

function StatusBar() {
  return (
    <div className="h-5 flex items-center bg-[#f3f4f4] text-[9px] text-[#333] pr-4">
      <span className="ml-2">Ready</span>
      <button className="ml-[18px] flex items-center gap-[1px]">
        <svg className="w-3 h-3" viewBox="0 0 12 12" fill="none" stroke="#444">
          <circle cx="5" cy="2" r="1.500" />
          <path d="M.5 3.500 4 5v2.500L2 11.500M9.500 3.500 6 5v2.500M6.500 7.500l4.500 4M11 7.500l-4.500 4" />
        </svg>
        Accessibility: Investigate
      </button>
      <div className="flex-1 flex items-center justify-end">
        <button aria-label="Normal view" className="w-[33px] h-5 flex items-center justify-center bg-[#dcdcdc]">
          <svg className="w-[11px] h-[11px]" viewBox="0 0 11 11" fill="none" stroke="#333">
            <path d="M.5.500h10v10H.5zM.5 3.800h10M.5 7.200h10M3.800.5v10M7.200.5v10" />
          </svg>
        </button>
        <button aria-label="Page layout view" className="w-[33px] flex justify-center">
          <svg className="w-[11px] h-[11px]" viewBox="0 0 11 11" fill="none" stroke="#333">
            <path d="M.5.500h10v10H.5zM2.500 2.500h6v6h-6zM4 4.500h3M4 6.500h3" />
          </svg>
        </button>
        <button aria-label="Page break view" className="w-[33px] flex justify-center">
          <svg className="w-[11px] h-[11px]" viewBox="0 0 11 11" fill="none" stroke="#333">
            <path d="M.5.500h10v10H.5zM3.500.5v5h4v-5M3.500 5.500h-3M7.500 5.500h3" />
          </svg>
        </button>
        <span className="w-3 text-center text-[12px] leading-4">−</span>
        <input
          type="range"
          aria-label="Zoom"
          defaultValue="50"
          className="mx-[1px] w-[84px] h-[11px] appearance-none bg-transparent bg-[linear-gradient(#888,#888)] bg-[length:100%_1px] bg-center bg-no-repeat [&::-webkit-slider-thumb]:appearance-none [&::-webkit-slider-thumb]:w-1 [&::-webkit-slider-thumb]:h-[11px] [&::-webkit-slider-thumb]:bg-[#444]"
        />
        <span className="w-3 text-center text-[12px] leading-4">+</span>
        <span className="ml-2">100%</span>
      </div>
    </div>
  );
}

function ExcelWindow() {
  return (
    <section className="absolute left-[470px] top-[15px] w-[611px] flex flex-col overflow-hidden rounded-lg border border-[#2c7a55] bg-[#e7eff2] shadow-[0_6px_24px_rgba(0,0,0,0.4)]">
      <ExcelTitle />
      <ExcelTabs />
      <ExcelRibbon />
      <FormulaBar />
      <Sheet />
      <SheetTabs />
      <StatusBar />
    </section>
  );
}

export default function App() {
  return (
    <div className="h-screen flex flex-col overflow-hidden bg-white font-['Open_Sans','Noto_Sans_CJK_SC',sans-serif]">
      <header>
        <TitleBar />
        <Toolbar />
        <FileTabs />
      </header>
      <main className="relative flex-1 overflow-hidden">
        <CadDrawing />
        <CategoryPanel />
        <ExcelWindow />
      </main>
      <footer className="h-5 flex bg-[#f8f8f8] border-t border-[#d0d0d0] pl-[2px] text-[11px]">
        <button className="w-[85px] pt-[2px] leading-4 bg-white text-[#3f9ccb]">Model</button>
        <button className="w-[87px] pt-[2px] leading-4 bg-[#eeeeee] border-x border-[#dcdcdc] text-[#222]">布局1</button>
      </footer>
    </div>
  );
}
